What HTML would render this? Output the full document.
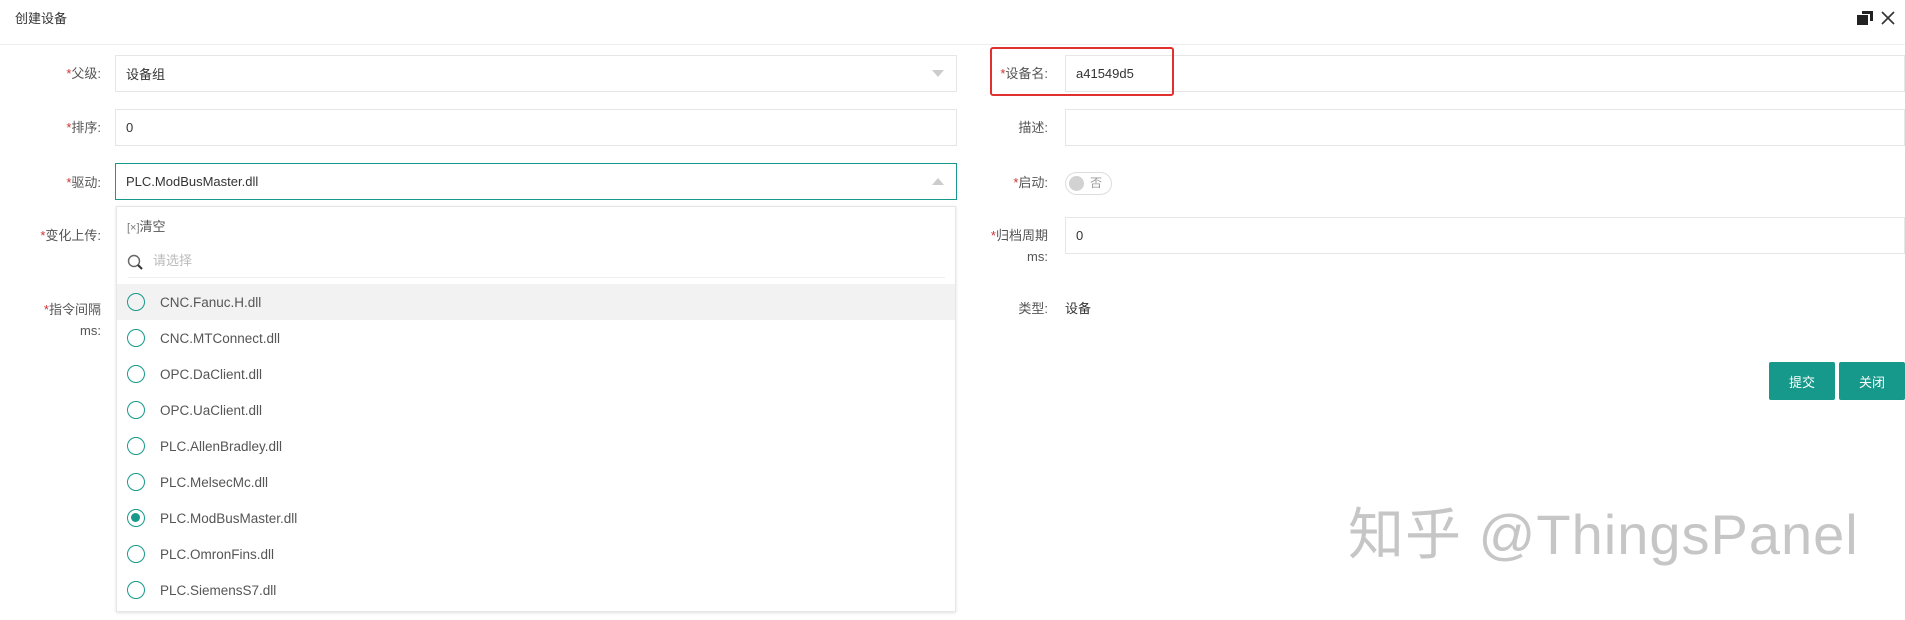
<!DOCTYPE html>
<html><head><meta charset="utf-8"><style>
*{box-sizing:border-box;margin:0;padding:0}
body{width:1905px;height:620px;background:#fff;position:relative;overflow:hidden;font-family:"Liberation Sans","Noto Sans CJK SC",sans-serif;font-size:13px;color:#333}
.a{position:absolute}
.lbl{position:absolute;text-align:right;font-size:13px;color:#555;line-height:20px}
.lbl i{font-style:normal;color:#c33}
.inp{position:absolute;border:1px solid #e6e6e6;background:#fff;font-size:13px;color:#333;padding-left:10px;display:flex;align-items:center}
.item{position:absolute;left:117px;width:838px;height:36px;display:flex;align-items:center;font-size:13.5px;color:#555}
.item .r{width:18px;height:18px;border:1.5px solid #16998a;border-radius:50%;margin-left:10px;margin-right:15px;position:relative}
.item .r.on::after{content:"";position:absolute;left:3px;top:3px;width:9px;height:9px;border-radius:50%;background:#16998a}
.btn{position:absolute;background:#16998a;color:#fff;font-size:13px;display:flex;align-items:center;justify-content:center;border-radius:2px}
</style></head><body>
<div class="a" style="left:15px;top:10px;font-size:13px;color:#333;line-height:18px">创建设备</div>
<div class="a" style="left:1857px;top:15px;width:11px;height:10px;background:#222"></div>
<div class="a" style="left:1862px;top:11px;width:11px;height:10px;border-top:3px solid #222;border-right:3px solid #222"></div>
<svg class="a" style="left:1880px;top:11px" width="16" height="14"><path d="M2 1L14 13M14 1L2 13" stroke="#333" stroke-width="1.6"/></svg>
<div class="a" style="left:0;top:44px;width:1905px;height:1px;background:#eee"></div>

<div class="lbl" style="left:0;width:101px;top:64px"><i>*</i>父级:</div>
<div class="inp" style="left:115px;top:55px;width:842px;height:37px">设备组</div>
<svg class="a" style="left:932px;top:70px" width="12" height="8"><path d="M0 0H12L6 7Z" fill="#ccc"/></svg>

<div class="lbl" style="left:0;width:101px;top:118px"><i>*</i>排序:</div>
<div class="inp" style="left:115px;top:109px;width:842px;height:37px">0</div>

<div class="lbl" style="left:0;width:101px;top:173px"><i>*</i>驱动:</div>
<div class="inp" style="left:115px;top:163px;width:842px;height:37px;border-color:#16998a">PLC.ModBusMaster.dll</div>
<svg class="a" style="left:932px;top:178px" width="12" height="8"><path d="M0 7H12L6 0Z" fill="#ccc"/></svg>

<div class="lbl" style="left:0;width:101px;top:226px"><i>*</i>变化上传:</div>
<div class="lbl" style="left:0;width:101px;top:299px;line-height:21px"><i>*</i>指令间隔<br>ms:</div>

<div class="a" style="left:116px;top:206px;width:840px;height:406px;border:1px solid #e6e6e6;box-shadow:0 1px 3px rgba(0,0,0,.12);background:#fff"></div>
<div class="a" style="left:127px;top:218px;font-size:13px;color:#555;line-height:18px"><span style="font-size:11px;color:#777">[×]</span>清空</div>
<svg class="a" style="left:127px;top:254px" width="17" height="17"><circle cx="7" cy="7" r="5.5" fill="none" stroke="#666" stroke-width="1.4"/><path d="M11 11L15 15" stroke="#333" stroke-width="2"/></svg>
<div class="a" style="left:153px;top:252px;font-size:13px;color:#bbb;line-height:18px">请选择</div>
<div class="a" style="left:128px;top:277px;width:817px;height:1px;background:#eee"></div>
<div class="a" style="left:117px;top:284px;width:838px;height:36px;background:#f2f2f2"></div>
<div class="item" style="top:284px"><span class="r"></span>CNC.Fanuc.H.dll</div>
<div class="item" style="top:320px"><span class="r"></span>CNC.MTConnect.dll</div>
<div class="item" style="top:356px"><span class="r"></span>OPC.DaClient.dll</div>
<div class="item" style="top:392px"><span class="r"></span>OPC.UaClient.dll</div>
<div class="item" style="top:428px"><span class="r"></span>PLC.AllenBradley.dll</div>
<div class="item" style="top:464px"><span class="r"></span>PLC.MelsecMc.dll</div>
<div class="item" style="top:500px"><span class="r on"></span>PLC.ModBusMaster.dll</div>
<div class="item" style="top:536px"><span class="r"></span>PLC.OmronFins.dll</div>
<div class="item" style="top:572px"><span class="r"></span>PLC.SiemensS7.dll</div>

<div class="lbl" style="left:960px;width:88px;top:64px"><i>*</i>设备名:</div>
<div class="inp" style="left:1065px;top:55px;width:840px;height:37px">a41549d5</div>
<div class="a" style="left:990px;top:47px;width:184px;height:49px;border:2.5px solid #e03030;border-radius:3px"></div>

<div class="lbl" style="left:960px;width:88px;top:118px">描述:</div>
<div class="inp" style="left:1065px;top:109px;width:840px;height:37px"></div>

<div class="lbl" style="left:960px;width:88px;top:173px"><i>*</i>启动:</div>
<div class="a" style="left:1065px;top:172px;width:47px;height:23px;border:1px solid #ddd;border-radius:12px"></div>
<div class="a" style="left:1069px;top:176px;width:15px;height:15px;border-radius:50%;background:#d2d2d2"></div>
<div class="a" style="left:1090px;top:174px;font-size:12px;color:#999;line-height:18px">否</div>

<div class="lbl" style="left:960px;width:88px;top:225px;line-height:21px"><i>*</i>归档周期<br>ms:</div>
<div class="inp" style="left:1065px;top:217px;width:840px;height:37px">0</div>

<div class="lbl" style="left:960px;width:88px;top:299px">类型:</div>
<div class="a" style="left:1065px;top:299px;font-size:13px;color:#333;line-height:20px">设备</div>

<div class="btn" style="left:1769px;top:362px;width:66px;height:38px">提交</div>
<div class="btn" style="left:1839px;top:362px;width:66px;height:38px">关闭</div>

<div class="a" style="left:1348px;top:500px;font-size:56px;line-height:70px;color:#c6c6c6;font-family:'Liberation Sans','Noto Sans CJK SC',sans-serif;white-space:nowrap;letter-spacing:1px">知乎 @ThingsPanel</div>
</body></html>
